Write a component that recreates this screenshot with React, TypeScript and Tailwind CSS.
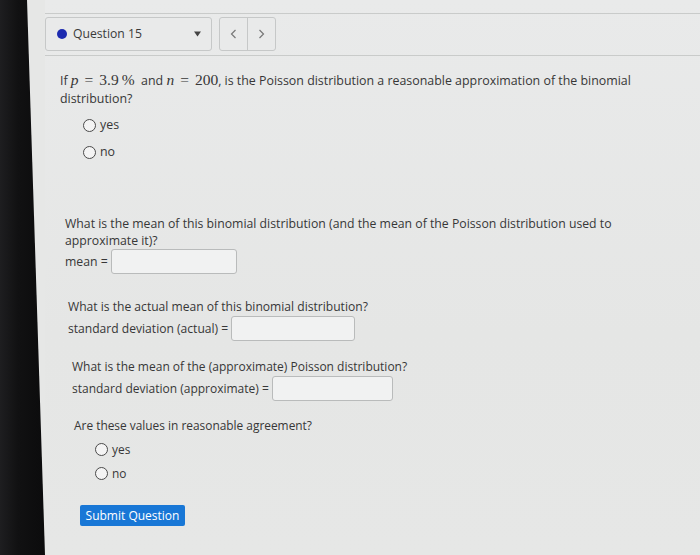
import React from "react";

const Radio = ({ label }: { label: string }) => (
  <div className="flex items-center h-[20px]">
    <span className="w-[13px] h-[13px] rounded-full border-[1.5px] border-[#4a4a4a] bg-[#f4f4f4]" />
    <span className="ml-[4px]">{label}</span>
  </div>
);

const Field = ({ w }: { w: string }) => (
  <span className={`${w} h-[25px] ml-[3px] border border-[#b9bbbb] rounded-[3px] bg-[#f1f2f2] inline-block`} />
);

const M = ({ children }: { children: React.ReactNode }) => (
  <span className="font-['Liberation_Serif',serif] text-[15.5px]">{children}</span>
);

const Eq = () => <span className="mx-[6px]">=</span>;

export default function App() {
  return (
    <div className="flex h-[555px] w-[700px] overflow-hidden bg-[#e6e7e6] font-['Open_Sans',sans-serif] text-[12.1px] leading-[18px] text-[#373737]">
      <div className="w-[45px] shrink-0 bg-[linear-gradient(90deg,#1e1e20_0%,#111112_40%,#0b0b0c_100%)] [clip-path:polygon(0_0,27px_0,45px_100%,0_100%)]" />
      <div className="flex-1 flex flex-col pt-[13px] bg-[linear-gradient(180deg,#e9eaea_0%,#e5e6e5_60%,#e6e7e6_100%)]">
        <div className="flex items-center border-y border-[#c9cbca] h-[43px] pb-[2px]">
          <div className="flex items-center w-[167px] h-[34px] border border-[#c6c8c8] rounded-[3px] bg-[#e9eaea] pl-[11px] pr-[10px]">
            <span className="w-[10px] h-[10px] rounded-full bg-[#1d2bb0]" />
            <span className="ml-[6px] text-[12.2px] text-[#3a3a3a]">Question 15</span>
            <svg className="ml-auto" width="7" height="6" viewBox="0 0 7 6">
              <path d="M0 0.5 H7 L3.5 5.5 Z" fill="#444" />
            </svg>
          </div>
          <div className="ml-[7px] flex w-[57px] h-[34px] border border-[#c6c8c8] rounded-[3px] bg-[#e9eaea]">
            <div className="flex-1 flex items-center justify-center border-r border-[#c6c8c8]">
              <svg width="7" height="10" viewBox="0 0 7 10">
                <path d="M5.5 1 L1.5 5 L5.5 9" stroke="#777" strokeWidth="1.2" fill="none" />
              </svg>
            </div>
            <div className="flex-1 flex items-center justify-center">
              <svg width="7" height="10" viewBox="0 0 7 10">
                <path d="M1.5 1 L5.5 5 L1.5 9" stroke="#777" strokeWidth="1.2" fill="none" />
              </svg>
            </div>
          </div>
        </div>

        <div className="pl-[15px] mt-[15px] text-[12.4px]">
          <p>
            If&nbsp;<M><i>p</i><Eq />3.9<span className="ml-[3px]">%</span></M>&nbsp; and <M><i>n</i><Eq />200</M>, is the Poisson distribution a reasonable approximation of the binomial
            <br />
            distribution?
          </p>
          <div className="pl-[23px] mt-[7px] flex flex-col gap-[7px]">
            <Radio label="yes" />
            <Radio label="no" />
          </div>
        </div>

        <div className="pl-[20px] mt-[53px] text-[12.25px]">
          <p className="leading-[17px]">
            What is the mean of this binomial distribution (and the mean of the Poisson distribution used to
            <br />
            approximate it)?
          </p>
          <div className="flex items-center">
            <span>mean =</span>
            <Field w="w-[126px]" />
          </div>
        </div>

        <div className="pl-[23px] mt-[24px]">
          <p>What is the actual mean of this binomial distribution?</p>
          <div className="flex items-center">
            <span>standard deviation (actual) =</span>
            <Field w="w-[124px]" />
          </div>
        </div>

        <div className="pl-[27px] mt-[17px] text-[12px]">
          <p>What is the mean of the (approximate) Poisson distribution?</p>
          <div className="flex items-center">
            <span>standard deviation (approximate) =</span>
            <Field w="w-[121px]" />
          </div>
        </div>

        <div className="pl-[29px] mt-[15px] text-[11.9px]">
          <p>Are these values in reasonable agreement?</p>
          <div className="pl-[21px] mt-[5px] flex flex-col gap-[4px]">
            <Radio label="yes" />
            <Radio label="no" />
          </div>
        </div>

        <div className="pl-[35px] mt-[22px]">
          <button className="w-[105px] h-[21px] bg-[#1877d6] text-white text-[12px] leading-[21px] rounded-[2px]">
            Submit Question
          </button>
        </div>
      </div>
    </div>
  );
}
